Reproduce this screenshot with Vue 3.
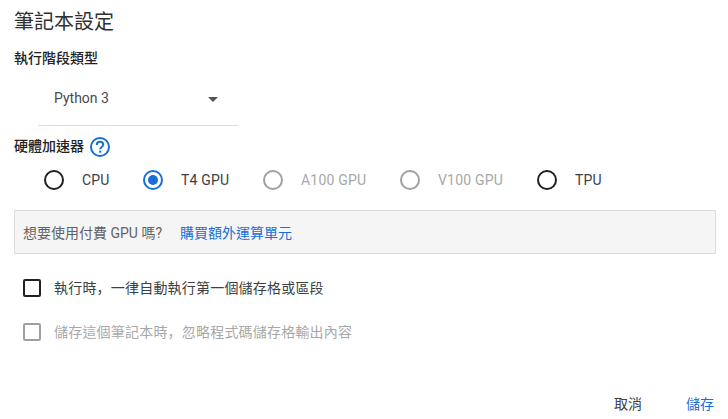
<template>
  <div class="dialog">
    <h1 class="title">筆記本設定</h1>

    <div class="label runtime-label">執行階段類型</div>
    <div class="select">
      <span>Python 3</span>
      <span class="arrow"></span>
    </div>

    <div class="accel-label">
      <span class="label">硬體加速器</span>
      <svg class="help" width="20" height="20" viewBox="0 0 20 20">
        <circle cx="10" cy="10" r="9" fill="none" stroke="#1a6ed8" stroke-width="2" />
        <path d="M6.800 7.900c0-1.900 1.400-3.100 3.200-3.100s3.200 1.200 3.200 2.900c0 2.300-3 2.300-3 4.600" fill="none" stroke="#1a6ed8" stroke-width="2" />
        <rect x="9.100" y="13.600" width="2.100" height="2.100" fill="#1a6ed8" />
      </svg>
    </div>

    <div class="radios">
      <div
        v-for="opt in accelerators"
        :key="opt.name"
        class="radio"
        :class="{ disabled: opt.disabled, checked: opt.checked }"
      >
        <span class="ring"></span>
        <span class="radio-text">{{ opt.name }}</span>
      </div>
    </div>

    <div class="promo">
      <span>想要使用付費 GPU 嗎?</span>
      <a class="promo-link">購買額外運算單元</a>
    </div>

    <div class="check first">
      <span class="box"></span>
      <span class="check-text">執行時<span class="comma">，</span>一律自動執行第一個儲存格或區段</span>
    </div>
    <div class="check disabled">
      <span class="box"></span>
      <span class="check-text">儲存這個筆記本時<span class="comma">，</span>忽略程式碼儲存格輸出內容</span>
    </div>

    <div class="actions">
      <a class="btn">取消</a>
      <a class="btn save">儲存</a>
    </div>
  </div>
</template>

<script setup>
const accelerators = [
  { name: 'CPU' },
  { name: 'T4 GPU', checked: true },
  { name: 'A100 GPU', disabled: true },
  { name: 'V100 GPU', disabled: true },
  { name: 'TPU' }
]
</script>

<style>
html, body { background: #fff; }
</style>

<style scoped>
.dialog {
  width: 728px;
  height: 419px;
  box-sizing: border-box;
  padding: 8px 12px 0 14px;
  position: relative;
  font-family: Roboto, "Noto Sans CJK TC", sans-serif;
  font-size: 14px;
  color: #3c4043;
  overflow: hidden;
}
.title { margin: 0; font-size: 20px; font-weight: 400; line-height: 28px; color: #303030; }
.label { font-size: 14px; font-weight: 500; color: #212121; }
.runtime-label { margin-top: 13px; line-height: 18px; }
.select {
  margin: 13px 0 0 24px;
  width: 200px;
  height: 46px;
  box-sizing: border-box;
  border-bottom: 1px solid #dcdcdc;
  padding-left: 16px;
  padding-top: 8px;
  display: flex;
  align-items: flex-start;
  justify-content: space-between;
  line-height: 20px;
  color: #4a4a4a;
}
.arrow {
  margin: 9px 20px 0 0;
  width: 0;
  height: 0;
  border-left: 5px solid transparent;
  border-right: 5px solid transparent;
  border-top: 5px solid #555;
}
.accel-label { display: flex; align-items: center; gap: 6px; height: 22px; margin-top: 8px; }
.help { display: block; margin-top: 3px; }
.radios { display: flex; margin: 13px 0 0 30px; height: 22px; letter-spacing: 0.2px; }
.radio { display: flex; align-items: center; color: #3c4043; }
.radio:nth-child(1) { width: 99px; }
.radio:nth-child(2) { width: 120px; }
.radio:nth-child(3) { width: 137px; }
.radio:nth-child(4) { width: 137px; }
.ring {
  width: 20px;
  height: 20px;
  box-sizing: border-box;
  border: 2px solid #212121;
  border-radius: 50%;
  margin-right: 18px;
  position: relative;
  flex: none;
}
.radio.checked .ring { border-color: #1a6ed8; }
.radio.checked .ring::after {
  content: "";
  position: absolute;
  inset: 3px;
  border-radius: 50%;
  background: #1a6ed8;
}
.radio.disabled { color: #a8a8a8; }
.radio.disabled .ring { border-color: #a0a0a0; }
.promo {
  margin-top: 19px;
  height: 44px;
  box-sizing: border-box;
  background: #f5f5f5;
  border: 1px solid #dcdcdc;
  padding-left: 8px;
  display: flex;
  align-items: center;
  color: #5f6368;
}
.promo-link { margin-left: 18px; color: #1a6ed8; }
.check { display: flex; align-items: center; gap: 13px; margin-left: 9px; height: 20px; letter-spacing: 0.2px; }
.check-text { margin-top: -2px; }
.check.first { margin-top: 24px; color: #3c4043; }
.check.disabled { margin-top: 24px; color: #a8a8a8; }
.comma { font-family: "Noto Sans CJK SC", sans-serif; }
.box {
  width: 18px;
  height: 18px;
  box-sizing: border-box;
  border: 2px solid #212121;
  border-radius: 2px;
  flex: none;
}
.check.disabled .box { border-color: #a0a0a0; }
.actions {
  position: absolute;
  right: 14px;
  bottom: 6px;
  display: flex;
  gap: 44px;
}
.btn { color: #3c4043; line-height: 18px; }
.btn.save { color: #1a6ed8; }
</style>
